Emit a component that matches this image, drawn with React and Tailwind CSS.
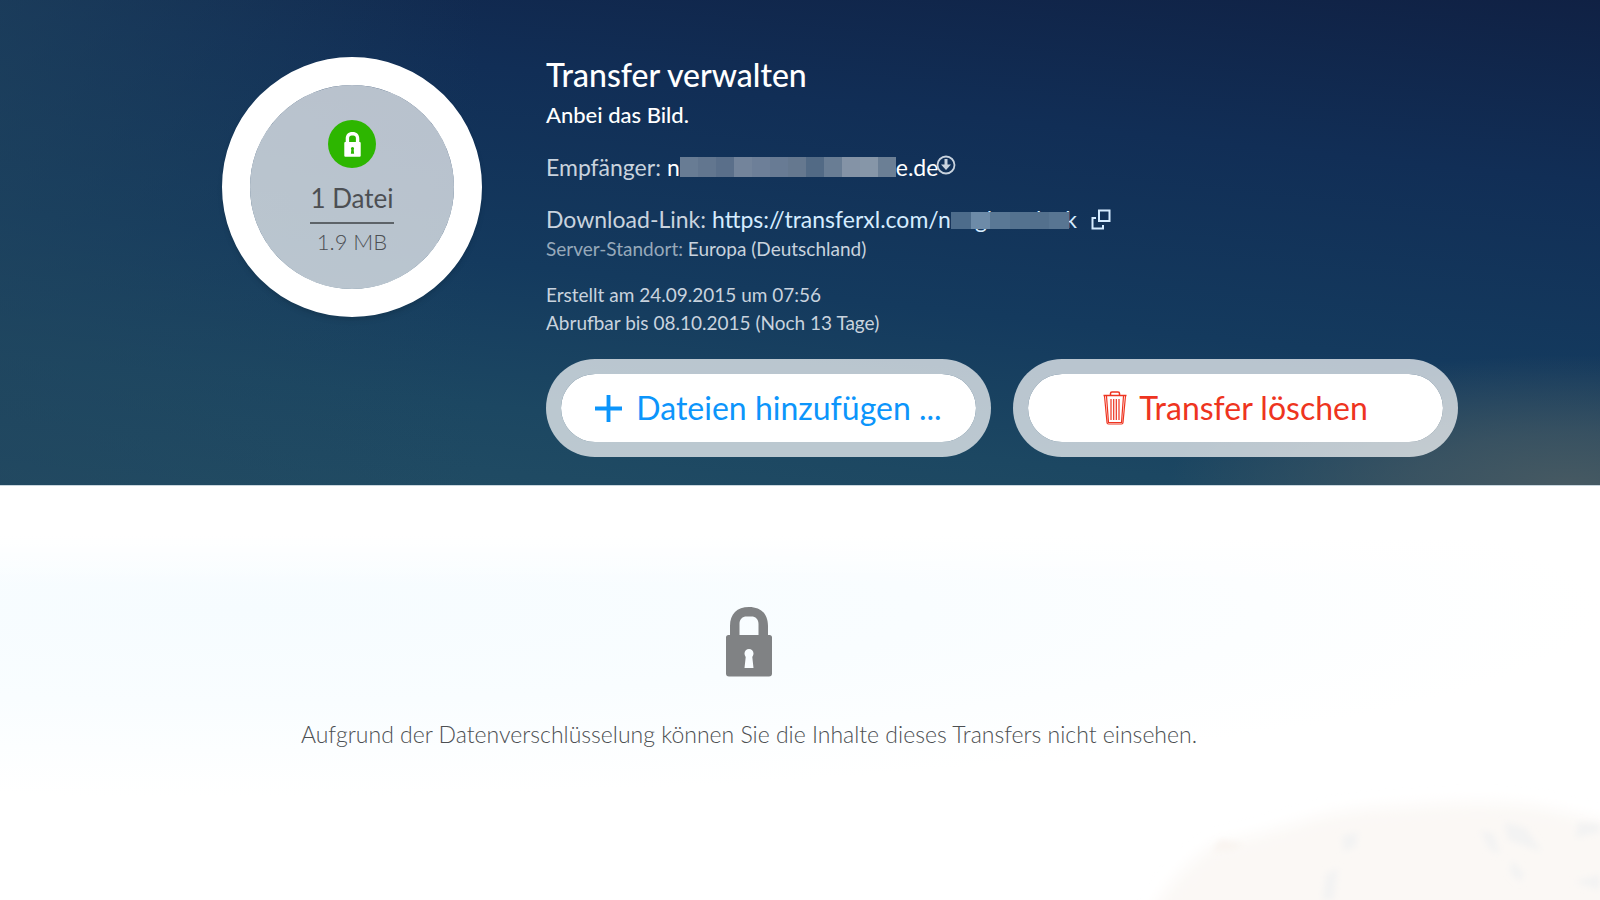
import React from "react";

const RECIPIENT_TILES = [
  "bg-[#687c94]",
  "bg-[#62768f]",
  "bg-[#5a6f8a]",
  "bg-[#73849b]",
  "bg-[#6d7f98]",
  "bg-[#687b94]",
  "bg-[#65788f]",
  "bg-[#526a85]",
  "bg-[#697d94]",
  "bg-[#8493a6]",
  "bg-[#8696a8]",
  "bg-[#6b7f95]",
];

const LINK_TILES = [
  "bg-[#4d6c8b]",
  "bg-[#6d8ba8]",
  "bg-[#5a7895]",
  "bg-[#54728f]",
  "bg-[#53708d]",
  "bg-[#587592]",
];

function LockIcon({ className }) {
  return (
    <svg viewBox="0 0 46 70" className={className} fill="currentColor" aria-hidden="true">
      <path
        fillRule="evenodd"
        d="M4 28V19C4 7 11 0 23 0s19 7 19 19v9h1.500a2.500 2.500 0 0 1 2.500 2.500v36a3 3 0 0 1-3 3H3a3 3 0 0 1-3-3v-36A2.500 2.500 0 0 1 2.500 28zM13.500 28h19V17c0-5-3-7.500-7-7.500h-5c-4 0-7 2.500-7 7.500zM18.500 46.500c0 1.500.8 2.500 1.200 3.500L18.500 61h9l-1.200-11c.4-1 1.200-2 1.200-3.500a4.500 4.500 0 0 0-9 0z"
      />
    </svg>
  );
}

function DownloadedIcon() {
  return (
    <svg viewBox="0 0 20 20" className="size-5" fill="none" stroke="currentColor" aria-hidden="true">
      <circle cx="10" cy="10" r="8.500" strokeWidth="1.800" />
      <path d="M10 4v8" strokeWidth="3" />
      <path d="M5 9.500 10 15l5-5.500z" fill="currentColor" stroke="none" />
    </svg>
  );
}

function CopyIcon() {
  return (
    <svg viewBox="0 0 20 22" className="h-[22px] w-5" fill="none" stroke="currentColor" strokeWidth="2" aria-hidden="true">
      <path d="M8 2.500h10.500v10.500H8z" />
      <path d="M5 10H1.500v10.500H12V17" />
    </svg>
  );
}

function PlusIcon() {
  return (
    <svg viewBox="0 0 28 28" className="size-[27px]" stroke="currentColor" strokeWidth="4" aria-hidden="true">
      <path d="M14 0v28M0 14h28" />
    </svg>
  );
}

function TrashIcon() {
  return (
    <svg viewBox="0 0 24 34" className="h-[34px] w-6" fill="none" stroke="currentColor" strokeWidth="1.200" aria-hidden="true">
      <path d="M.5 4.500h23M7.500 4V2.500A1.500 1.500 0 0 1 9 1h6a1.500 1.500 0 0 1 1.500 1.500V4" strokeWidth="1.500" />
      <path d="M1.500 5 4 31.500a1.500 1.500 0 0 0 1.500 1.500h13a1.500 1.500 0 0 0 1.500-1.500L22.500 5M3.500 5l2 26.500h13l2-26.500" />
      <path d="M8 8v21M10.700 8v21M13.300 8v21M16 8v21" />
    </svg>
  );
}

// Faded hillside in the bottom right corner
function Hillside() {
  return (
    <svg viewBox="0 0 480 130" className="pointer-events-none absolute right-0 bottom-0 h-[130px] w-[480px]" aria-hidden="true">
      <defs>
        <filter id="haze" x="-10%" y="-20%" width="120%" height="140%">
          <feGaussianBlur stdDeviation="8" />
        </filter>
        <filter id="soft" x="-50%" y="-50%" width="200%" height="200%">
          <feGaussianBlur stdDeviation="3" />
        </filter>
      </defs>
      <path
        d="M30 150C45 115 70 92 95 74c35-6 60-14 100-26 45-12 85-10 125-14 55-2 95 0 120 8l70 16v110H30z"
        fill="#fbf8f5"
        filter="url(#haze)"
      />
      <g fill="#f3f3f3" filter="url(#soft)">
        <path d="M100 70l24 4-10 6-22 2z" fill="#f9f4f0" />
        <path d="M222 66l16-4-2 14-12 6z" />
        <path d="M206 104l12-6-4 32h-12z" />
        <path d="M360 60l14 4 6 20-10-4z" />
        <path d="M384 52l22 6 16 24-34-12z" />
        <path d="M392 90l12 14-4 8-10-10z" />
        <path d="M458 52l22 2v8l-24 6z" />
        <path d="M454 112l26-8v16z" />
      </g>
    </svg>
  );
}

function Tiles({ colors }) {
  return (
    <span className="flex h-full w-full">
      {colors.map((color) => (
        <span key={color} className={`flex-1 ${color}`} />
      ))}
    </span>
  );
}

function FileBadge() {
  return (
    <div className="flex size-[260px] shrink-0 flex-col items-center rounded-full border-28 border-white bg-white/70 bg-clip-padding pt-[35px] text-[#4c4f53] shadow-md">
      <div className="flex size-12 items-center justify-center rounded-full bg-[#2db600] text-white">
        <LockIcon className="h-[25px] w-[17px]" />
      </div>
      <div className="mt-3 border-b-2 border-[#5d6368] pb-1.5 text-[26px] leading-9">1 Datei</div>
      <div className="text-[22px] leading-9 font-light">1.9 MB</div>
    </div>
  );
}

function PillButton({ className, children }) {
  return (
    <button
      type="button"
      className={`flex h-[98px] min-w-0 flex-1 cursor-pointer items-center justify-center rounded-full border-15 border-white/70 bg-white bg-clip-padding text-[32px] whitespace-nowrap ${className}`}
    >
      {children}
    </button>
  );
}

export default function App() {
  return (
    <div className="flex min-h-screen flex-col bg-white font-['Lato','Liberation_Sans',sans-serif]">
      <header className="flex items-start gap-16 border-b border-[#c9d6de] bg-[radial-gradient(ellipse_400px_130px_at_98%_100%,#465962_0%,#465962b0_40%,#46596200_100%),linear-gradient(90deg,#21455e99_0%,#21455e00_30%),linear-gradient(186deg,#102144_0%,#112e56_28%,#143a5e_58%,#1c4762_80%,#224d64_100%)] pt-[57px] pr-[142px] pb-7 pl-[222px]">
        <FileBadge />

        <div className="min-w-0 flex-1 text-[#c9d3de]">
          <h1 className="text-[32px] leading-9 font-medium text-white">Transfer verwalten</h1>
          <p className="mt-1 text-[22px] leading-9 font-medium text-white">Anbei das Bild.</p>

          <p className="mt-4 flex items-center text-[23px] leading-9">
            <span>Empfänger:</span>
            <span className="ml-1.5 text-white">n</span>
            <span className="h-5 w-[216px]">
              <Tiles colors={RECIPIENT_TILES} />
            </span>
            <span className="text-white">e.de</span>
            <span className="mb-1 -ml-0.5">
              <DownloadedIcon />
            </span>
          </p>

          <p className="mt-4 flex items-center text-[23px] leading-9">
            <span>Download-Link:</span>
            <a href="https://transferxl.com/" className="relative ml-1.5 flex text-[#d5ecff]">
              <span>https://transferxl.com/n</span>
              <span className="flex w-[126px] justify-between pl-6">
                <span>gl</span>
                <span className="ml-5">l</span>
                <span>k</span>
              </span>
              <span className="absolute right-2 bottom-2 h-[17px] w-[118px]">
                <Tiles colors={LINK_TILES} />
              </span>
            </a>
            <button type="button" aria-label="Link kopieren" className="ml-3.5 cursor-pointer text-[#d5ecff]">
              <CopyIcon />
            </button>
          </p>
          <p className="text-[19px] leading-6">
            <span className="text-[#97a9ba]">Server-Standort:</span> Europa (Deutschland)
          </p>

          <p className="mt-5 text-[19px] leading-7">Erstellt am 24.09.2015 um 07:56</p>
          <p className="text-[19px] leading-7">Abrufbar bis 08.10.2015 (Noch 13 Tage)</p>

          <div className="mt-[22px] flex gap-[22px]">
            <PillButton className="gap-3.5 text-[#0c95fb]">
              <PlusIcon />
              Dateien hinzufügen ...
            </PillButton>
            <PillButton className="gap-3 text-[#ee3420]">
              <TrashIcon />
              Transfer löschen
            </PillButton>
          </div>
        </div>
      </header>

      <main className="relative flex flex-1 flex-col items-center bg-[linear-gradient(180deg,#ffffff_12%,#ffffff00_24%),radial-gradient(ellipse_85%_45%_at_15%_30%,#f6fcff_0%,#f9fdff_50%,#f9fdff00_100%)] pt-[121px] pr-[102px]">
        <Hillside />
        <LockIcon className="h-[70px] w-[46px] text-[#808284]" />
        <p className="mt-[39px] text-[23px] leading-9 font-light text-[#4c4f52]">
          Aufgrund der Datenverschlüsselung können Sie die Inhalte dieses Transfers nicht einsehen.
        </p>
      </main>
    </div>
  );
}
